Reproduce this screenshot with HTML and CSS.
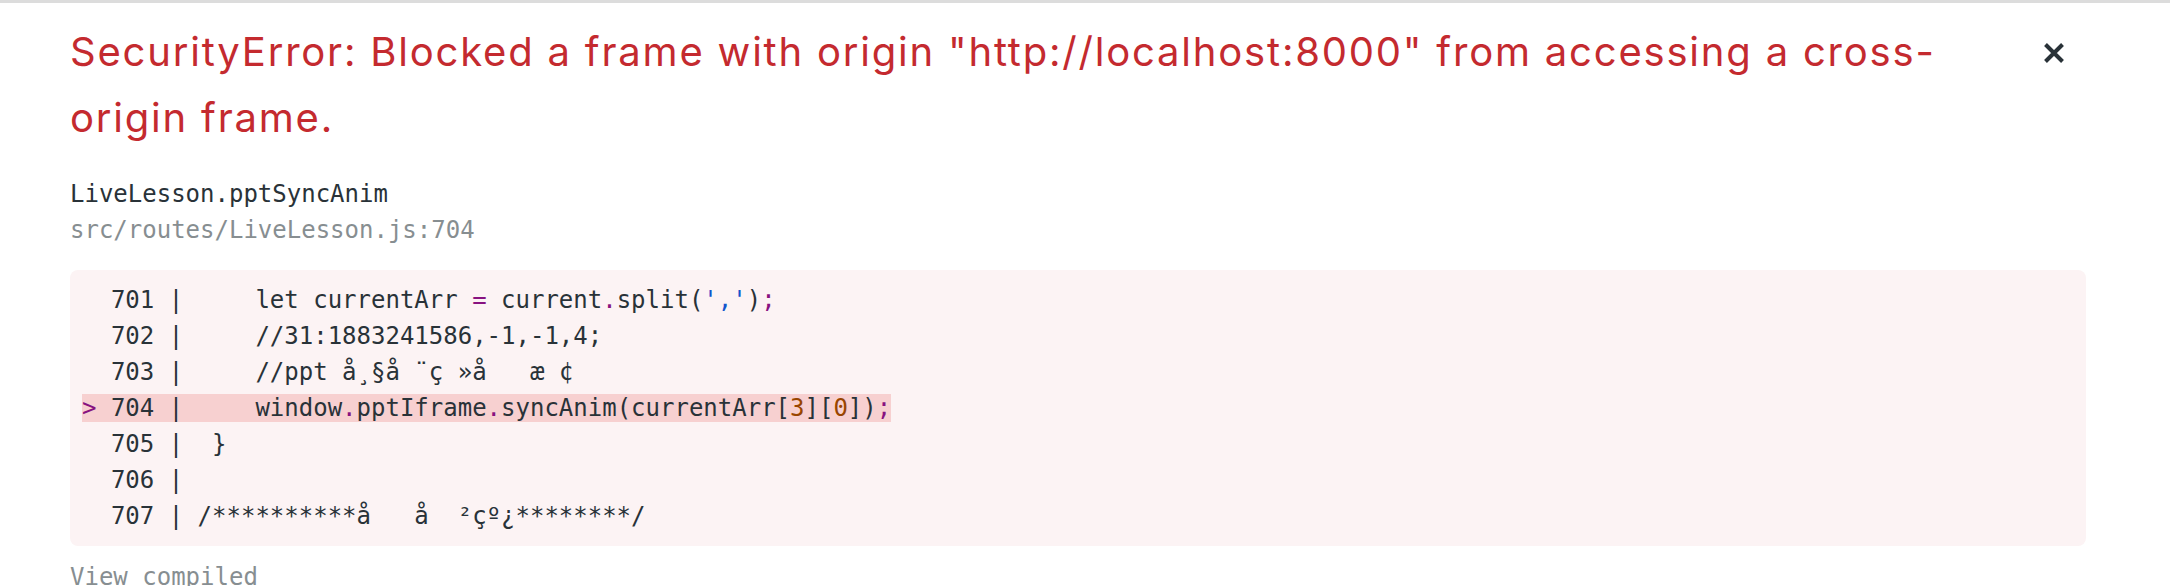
FILE: index.html
```html
<!DOCTYPE html>
<html lang="en">

<head>
    <meta charset="UTF-8" />
    <meta name="viewport" content="width=device-width, initial-scale=1.0" />
    <title>Error Overlay</title>
    <link rel="stylesheet" href="styles.css">
</head>

<body>
    <div class="overlay">
        <!-- Error message and close button -->
        <div class="header-row">
            <h1 class="header">SecurityError: Blocked a frame with origin "http://localhost:8000" from accessing a cross-origin frame.</h1>
            <button class="close" aria-label="Close">
                <svg width="22" height="22" viewBox="0 0 22 22">
                    <path d="M2.5 2.5 L19.5 19.5 M19.5 2.5 L2.5 19.5" stroke="#293238" stroke-width="4" fill="none" />
                </svg>
            </button>
        </div>

        <!-- Stack frame -->
        <div class="frame">
            <div class="frame-name">LiveLesson.pptSyncAnim</div>
            <div class="frame-file">src/routes/LiveLesson.js:704</div>
            <pre class="code"><span>  701 |     let currentArr <span class="p">=</span> current<span class="p">.</span>split(<span class="s">','</span>)<span class="p">;</span></span>
<span>  702 |     //31:1883241586,-1,-1,4;</span>
<span>  703 |     //ppt å¸§å ¨ç »å   æ ¢</span>
<span class="hl"><span class="p">&gt;</span> 704 |     window<span class="p">.</span>pptIframe<span class="p">.</span>syncAnim(currentArr[<span class="n">3</span>][<span class="n">0</span>])<span class="p">;</span></span>
<span>  705 |  }</span>
<span>  706 | </span>
<span>  707 | /**********å   å  ²çº¿********/</span></pre>
            <button class="toggle">View compiled</button>
        </div>
    </div>
</body>

</html>
```

FILE: styles.css
```css
body {
    margin: 0;
    background: white;
    border-top: 3px solid #dcdcdc;
}

.overlay {
    padding: 16px 84px 0 70px;
}

.header-row {
    display: flex;
    justify-content: space-between;
    align-items: flex-start;
}

.header {
    margin: 0;
    max-width: 1940px;
    font-family: 'Inter', 'Liberation Sans', sans-serif;
    font-size: 40px;
    font-weight: normal;
    line-height: 66px;
    letter-spacing: 1.8px;
    color: #c42a2f;
    white-space: pre-wrap;
}

.close {
    margin: 23px 21px 0 0;
    padding: 0;
    border: none;
    background: none;
    line-height: 0;
    cursor: pointer;
}

.frame {
    margin-top: 25px;
    font-family: 'DejaVu Sans Mono', monospace;
    font-size: 24px;
    line-height: 36px;
}

.frame-name {
    color: #293238;
}

.frame-file {
    color: #878e91;
}

.code {
    margin: 22px 0 0;
    padding: 12px;
    background: #fcf3f4;
    border-radius: 8px;
    font: inherit;
    color: #293238;
}

/* Highlighted error line */
.hl {
    background: #f7d0d0;
}

.p {
    color: #881280;
}

.s {
    color: #1155cc;
}

.n {
    color: #994500;
}

.toggle {
    display: block;
    margin-top: 13px;
    padding: 0;
    border: none;
    background: none;
    font: inherit;
    color: #878e91;
    cursor: pointer;
}
```
